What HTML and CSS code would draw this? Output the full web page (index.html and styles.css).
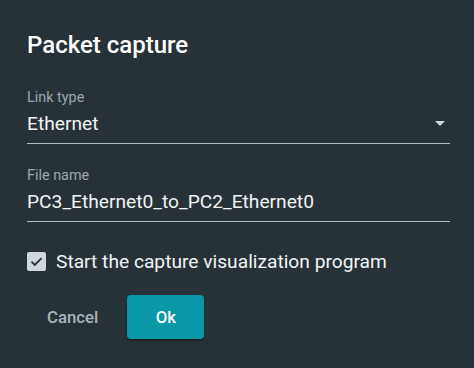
FILE: index.html
```html
<!DOCTYPE html>
<html lang="en">
<head>
<meta charset="utf-8">
<title>Packet capture</title>
<link rel="stylesheet" href="styles.css">
</head>
<body>
<div class="dialog">
  <h1 class="title">Packet capture</h1>
  <div class="field">
    <div class="label">Link type</div>
    <div class="value select">
      <span>Ethernet</span>
      <svg class="arrow" width="10" height="5" viewBox="0 0 10 5"><path d="M0 0 L10 0 L5 5 Z" fill="#cfd8dc"/></svg>
    </div>
  </div>
  <div class="field second">
    <div class="label">File name</div>
    <div class="value">PC3_Ethernet0_to_PC2_Ethernet0</div>
  </div>
  <div class="check-row">
    <span class="checkbox">
      <svg width="19" height="19" viewBox="0 0 19 19"><path d="M4.5 9.6 L7.8 12.9 L14.6 6.1" fill="none" stroke="#263238" stroke-width="1.8"/></svg>
    </span>
    <span class="check-label">Start the capture visualization program</span>
  </div>
  <div class="actions">
    <button class="btn cancel">Cancel</button>
    <button class="btn ok">Ok</button>
  </div>
</div>
</body>
</html>
```

FILE: styles.css
```css
html, body {
  margin: 0;
  padding: 0;
  background: #263238;
}
body {
  width: 474px;
  height: 368px;
  overflow: hidden;
  font-family: Roboto, "Noto Sans", sans-serif;
}
.dialog {
  padding: 31px 24px 0 27px;
}
.title {
  margin: 0;
  font-size: 24px;
  line-height: 28px;
  font-weight: 500;
  color: #ffffff;
}
.field {
  margin-top: 30px;
  padding-bottom: 8px;
  border-bottom: 1px solid #b0bec5;
}
.field.second {
  margin-top: 23px;
}
.label {
  font-size: 14.4px;
  line-height: 17px;
  color: #9ea8ad;
}
.value {
  margin-top: 6px;
  font-size: 19.2px;
  line-height: 23px;
  color: #f2f4f5;
}
.select {
  display: flex;
  align-items: center;
  justify-content: space-between;
  padding-right: 5px;
}
.arrow {
  display: block;
}
.check-row {
  display: flex;
  align-items: center;
  gap: 10px;
  margin-top: 28px;
}
.checkbox {
  width: 19px;
  height: 19px;
  border-radius: 2px;
  background: #cfd8dc;
  display: block;
  flex: none;
}
.checkbox svg {
  display: block;
}
.check-label {
  font-size: 19.2px;
  line-height: 23px;
  color: #f2f4f5;
}
.actions {
  display: flex;
  align-items: center;
  gap: 9px;
  margin-top: 22px;
}
.btn {
  font-family: Roboto, "Noto Sans", sans-serif;
  font-size: 16.8px;
  font-weight: 500;
  height: 44px;
  border: none;
  border-radius: 4px;
  cursor: pointer;
  padding: 0 20px;
}
.cancel {
  background: transparent;
  color: #a9b5bb;
}
.ok {
  width: 77px;
  padding: 0;
  background: #0a98a6;
  color: #ffffff;
  box-shadow: 0 2px 2px rgba(0, 0, 0, 0.35);
}
```
